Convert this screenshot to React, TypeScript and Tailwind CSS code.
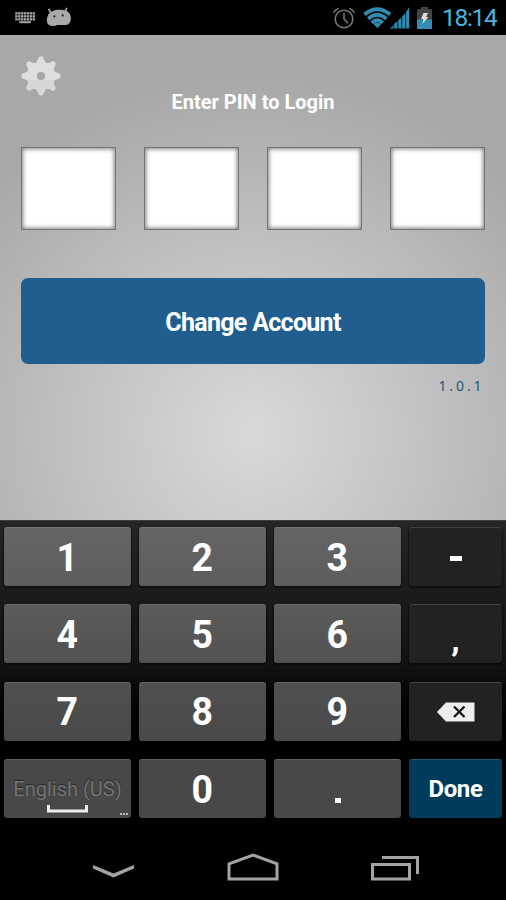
import type { ReactNode } from 'react';

function StatusBar() {
  return (
    <header className="flex h-[35px] shrink-0 items-center bg-black">
      <svg className="ml-[15px]" width="21" height="12" viewBox="0 0 21 12" fill="#a6a6a6">
        {[0, 3, 6].map((y) =>
          [0, 1, 2, 3, 4, 5, 6].map((n) => <rect key={`${y}-${n}`} x={n * 2.9 + 0.2} y={y + 0.2} width="2.4" height="2.3" />),
        )}
        <rect x="4.3" y="9.2" width="11.5" height="2" />
      </svg>
      <svg className="-mt-px ml-[10px]" width="26" height="20" viewBox="0 0 26 20">
        <path d="M3 2.500L5.500 7M20.500 1.500L18.500 6" stroke="#aaa" strokeWidth="1.800" strokeLinecap="round" />
        <path d="M6.500 4.200C10 2.500 16 2.200 20 3.800C23.500 5.200 25 8.500 24.800 12C24.500 16.500 21.500 18.500 18 18H11.500C9 19.300 5.500 19.500 3 18C.5 16 .5 12.500 1.500 9.500C2.500 6.500 4 5.200 6.500 4.200Z" fill="#aaa" />
        <circle cx="8.400" cy="9.300" r="1.100" fill="#222" />
        <circle cx="16.700" cy="8.400" r="1.100" fill="#222" />
      </svg>
      <svg className="ml-auto" width="24" height="24" viewBox="0 0 24 24" fill="none" stroke="#777" strokeWidth="1.600">
        <circle cx="12" cy="13" r="8.800" />
        <path d="M12 7V13L16 17.200M1.600 6.700Q3 3.500 6.700 2.200M22.400 6.700Q21 3.500 17.300 2.200" />
      </svg>
      <svg className="ml-[7px]" width="48" height="24" viewBox="0 0 48 24">
        <g fill="none" stroke="#318bb3" strokeWidth="3.700">
          <path d="M1.500 8.500Q14.300-2 27.100 8.500" />
          <path d="M5.200 12.800Q14.300 4.800 23.400 12.800" />
          <path d="M8.800 16.800Q14.300 11.700 19.800 16.800" />
        </g>
        <path d="M10.500 18Q14.300 15.500 18.100 18L14.300 22.300Z" fill="#318bb3" />
        <path d="M27 22.500L30.500 19V22.500ZM31.200 18L34.500 15V22.500H31.200ZM35.300 14.300L38.400 11.200V22.500H35.300ZM39.200 10.300L42.300 7.200V22.500H39.200ZM43.100 6.300L46.200 1V22.500H43.100Z" fill="#318bb3" />
      </svg>
      <svg className="ml-[6px]" width="15" height="22" viewBox="0 0 15 22">
        <path d="M0 2.200H4V0H11V2.200H15V13H0Z" fill="#444" />
        <path d="M0 12.500H15V22H0Z" fill="#318bb3" />
        <path d="M6.500 6H11L9 10H11.500L5.500 17L6.300 12H4Z" fill="#ddd" />
      </svg>
      <span className="mr-[8px] ml-[10px] w-[56px] translate-y-[1px] text-[24.500px] leading-none tracking-[-1.300px] whitespace-nowrap text-[#46b5df]">18:14</span>
    </header>
  );
}

function Gear() {
  return (
    <svg width="40" height="40" viewBox="-20 -20 40 40">
      <mask id="gear" maskUnits="userSpaceOnUse" x="-20" y="-20" width="40" height="40">
        <g fill="white">
          <circle r="14" />
          {[0, 45, 90, 135, 180, 225, 270, 315].map((angle) => (
            <path key={angle} transform={`rotate(${angle})`} d="M-6.500-11.500Q-3.800-13.800-2.900-17Q-2.500-19.700 0-19.700T2.900-17Q3.800-13.800 6.500-11.500Z" />
          ))}
        </g>
        <circle r="4.200" fill="black" />
      </mask>
      <g mask="url(#gear)">
        <rect x="-20" y="-20" width="40" height="40" fill="#dedede" />
        <rect x="-20" y="4" width="40" height="16" fill="#d7d7d7" />
      </g>
    </svg>
  );
}

function Key({ children, tone }: { children: ReactNode; tone: string }) {
  return (
    <button className={`flex h-[59px] items-center justify-center rounded-[3px] border-t border-white/15 text-[39px] leading-none font-bold text-white shadow-[0_1px_1px_1px_rgba(0,0,0,0.45)] ${tone}`}>
      {children}
    </button>
  );
}

const row1 = 'bg-linear-to-b from-[#656565] to-[#5d5d5d]';
const row2 = 'bg-linear-to-b from-[#5b5b5b] to-[#525252]';
const row3 = 'bg-linear-to-b from-[#505050] to-[#494949]';
const row4 = 'bg-[#484848]';
const dark = 'bg-[#222222]';

function Digit({ value, tone }: { value: string; tone: string }) {
  return (
    <Key tone={tone}>
      <span className="translate-y-[1px] scale-x-[0.960]">{value}</span>
    </Key>
  );
}

function Keyboard() {
  return (
    <section className="h-[320px] shrink-0 border-t border-[#3b403f] bg-linear-to-b from-[#252525] via-[#121212] via-45% to-black to-75% px-1 pt-[6px]">
      <div className="grid grid-cols-[127px_127px_127px_93px] gap-x-2 gap-y-[18.400px]">
        <Digit value="1" tone={row1} />
        <Digit value="2" tone={row1} />
        <Digit value="3" tone={row1} />
        <Key tone={dark}><span className="mt-[3px] h-[5px] w-[12px] bg-white" /></Key>
        <Digit value="4" tone={row2} />
        <Digit value="5" tone={row2} />
        <Digit value="6" tone={row2} />
        <Key tone={dark}><span className="translate-y-[5px] text-[34px]">,</span></Key>
        <Digit value="7" tone={row3} />
        <Digit value="8" tone={row3} />
        <Digit value="9" tone={row3} />
        <Key tone={dark}>
          <svg width="38" height="20" viewBox="0 0 38 20">
            <path d="M0 10L9 .5H37.500V19.500H9Z" fill="#eee" />
            <path d="M17 4.500L27.500 15M27.500 4.500L17 15" stroke="#181818" strokeWidth="2.300" />
          </svg>
        </Key>
        <Key tone={row4}>
          <div className="relative flex h-full w-full flex-col items-center pt-[19px]">
            <span className="text-[20px] leading-[20px] font-normal whitespace-nowrap text-[#747474] [text-shadow:0_-1px_1px_#222]">English (US)</span>
            <svg className="mt-[6px] shrink-0" width="41" height="8" viewBox="0 0 41 8"><path d="M1.500 0V6H39.500V0" fill="none" stroke="#eee" strokeWidth="3" /></svg>
            <svg className="absolute right-[3px] bottom-[3px]" width="8" height="2"><path d="M0 1H8" stroke="#bbb" strokeWidth="2" strokeDasharray="2 1" /></svg>
          </div>
        </Key>
        <Digit value="0" tone={row4} />
        <Key tone={row4}><span className="mt-[22px] h-[5px] w-[6px] bg-white" /></Key>
        <Key tone="bg-[#003b5c]"><span className="text-[24px] tracking-[-0.350px]">Done</span></Key>
      </div>
    </section>
  );
}

export default function App() {
  return (
    <div className="flex h-[900px] w-[506px] flex-col overflow-hidden bg-black font-[Roboto,sans-serif]">
      <StatusBar />
      <main className="h-[485px] shrink-0 bg-[radial-gradient(circle_at_50%_82%,#d9d9d9_0px,#c0c0c0_190px,#a8a8a8_360px)] px-[21px] pt-[21px]">
        <Gear />
        <h1 className="-mt-[6px] text-center text-[20px] leading-[24px] font-bold text-white">Enter PIN to Login</h1>
        <div className="mt-[33px] flex justify-between">
          {[1, 2, 3, 4].map((field) => (
            <div key={field} className="h-[83px] w-[95px] border border-[#747474] bg-white shadow-[inset_0_0_4px_1px_rgba(0,0,0,0.5)]" />
          ))}
        </div>
        <button className="mt-[48px] flex h-[86px] w-full items-center justify-center rounded-[7px] bg-[#205e90] text-[25px] font-bold text-white">
          <span className="translate-y-[2px] tracking-[-0.700px]">Change Account</span>
        </button>
        <p className="mt-[13px] mr-[3px] flex justify-end font-['Noto_Sans',sans-serif] text-[14px] leading-[17px] text-[#1d5480]">
          {'1.0.1'.split('').map((glyph, index) => <span key={index} className="w-[8.800px] text-center">{glyph}</span>)}
        </p>
      </main>
      <Keyboard />
      <nav className="h-[60px] shrink-0">
        <svg width="506" height="60" viewBox="0 0 506 60" fill="none" stroke="#a3a3a3" strokeWidth="3">
          <path d="M93 25L113.500 33.500L134 25V28.500L113.500 37.500L93 28.500Z" fill="#a3a3a3" stroke="none" />
          <path d="M229 23.800L253 15L277 23.800V39H229Z" />
          <path d="M372.500 24.500H409.500V39H372.500ZM382 17.500H417.500V34" />
        </svg>
      </nav>
    </div>
  );
}
